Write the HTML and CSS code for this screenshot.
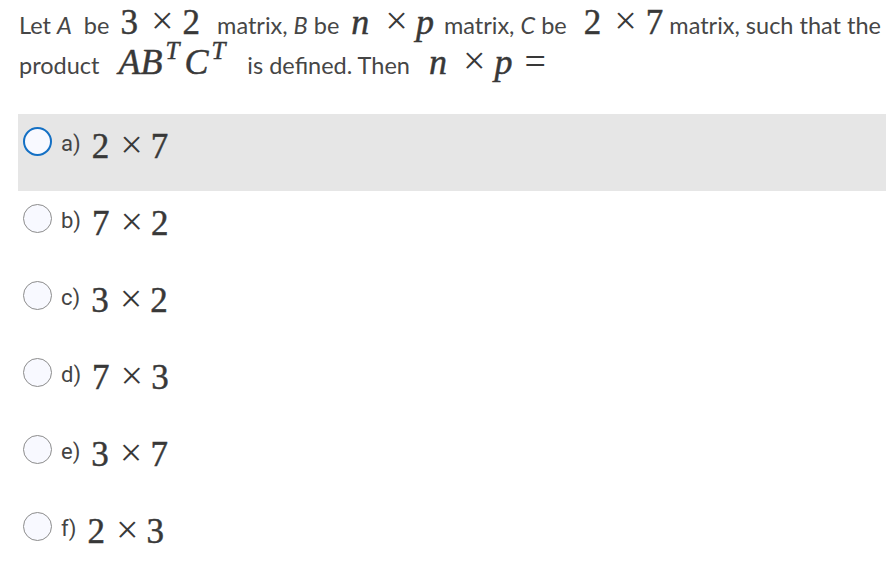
FILE: index.html
```html
<!DOCTYPE html>
<html lang="en">
<head>
<meta charset="utf-8">
<title>Question</title>
<link rel="stylesheet" href="styles.css">
</head>
<body>
<div class="question">
  <p class="stem">Let <i class="var">A</i>&nbsp; be <span class="m m1">3<span class="op">×</span>2</span>&nbsp; matrix, <i class="var">B</i> be <span class="m m2"><i class="n">n</i><span class="op">×</span><i>p</i></span> matrix, <i class="var">C</i> be&nbsp; <span class="m m3">2<span class="op">×</span>7</span> matrix, such that the<br>product <span class="m prod"><i>A</i><i class="b">B</i><sup>T</sup><i class="c">C</i><sup>T</sup></span> is defined. Then&nbsp; <span class="m m4"><i class="n">n</i><span class="op">×</span><i>p</i><span class="rel">=</span></span></p>
  <div class="options">
    <label class="opt selected"><span class="radio"></span><span class="lbl">a)</span><span class="m">2<span class="op">×</span>7</span></label>
    <label class="opt"><span class="radio"></span><span class="lbl">b)</span><span class="m">7<span class="op">×</span>2</span></label>
    <label class="opt"><span class="radio"></span><span class="lbl">c)</span><span class="m">3<span class="op">×</span>2</span></label>
    <label class="opt"><span class="radio"></span><span class="lbl">d)</span><span class="m">7<span class="op">×</span>3</span></label>
    <label class="opt"><span class="radio"></span><span class="lbl">e)</span><span class="m">3<span class="op">×</span>7</span></label>
    <label class="opt"><span class="radio"></span><span class="lbl">f)</span><span class="m">2<span class="op">×</span>3</span></label>
  </div>
</div>
</body>
</html>
```

FILE: styles.css
```css
html, body {
  margin: 0;
  padding: 0;
  background: #ffffff;
}

body {
  font-family: Lato, "Open Sans", sans-serif;
  color: #464646;
  width: 886px;
  overflow: hidden;
}

.stem {
  margin: 0;
  padding: 5px 0 0 19px;
  font-size: 23.5px;
  line-height: 40px;
  white-space: nowrap;
}

.var {
  font-style: italic;
}

.m {
  font-family: "Liberation Serif", serif;
  font-size: 35px;
  line-height: 34px;
  color: #383838;
  white-space: nowrap;
  -webkit-text-stroke: 0.45px #383838;
}

.m i {
  font-family: "Liberation Serif", serif;
  font-style: italic;
  font-size: 36px;
}

.m .n {
  margin-right: 2px;
}

.m sup {
  font-family: "Liberation Serif", serif;
  font-size: 25px;
  line-height: 0;
  vertical-align: 15px;
  font-style: italic;
  margin: 0 5px 0 2px;
}

.m .b,
.m .c {
  margin-right: 1px;
}

.op {
  font-size: 40px;
  line-height: 30px;
  margin: 0 9px 0 13px;
  -webkit-text-stroke: 0;
  font-style: normal;
}

.m1 {
  margin: 0 5px 0 5px;
}

.m2 {
  margin: 0 4px 0 6px;
}

.m2 .op {
  margin: 0 8px 0 14px;
}

.m3 {
  margin-left: 5px;
}

.prod {
  margin: 0 11px 0 13px;
}

.m4 {
  margin-left: 7px;
}

.m4 .op {
  margin: 0 9px 0 14px;
}

.rel {
  font-size: 38px;
  line-height: 30px;
  margin-left: 12px;
  -webkit-text-stroke: 0;
}

.options {
  margin-top: 29px;
  display: flex;
  flex-direction: column;
}

.opt {
  display: flex;
  align-items: flex-start;
  height: 77px;
  box-sizing: border-box;
  margin-left: 18px;
  padding: 13px 0 0 5px;
}

.opt.selected {
  background: #e6e6e6;
}

.radio {
  flex: none;
  width: 29px;
  height: 29px;
  box-sizing: border-box;
  border-radius: 50%;
  border: 1px solid #8c8c8c;
  background: #f8f9ff;
}

.selected .radio {
  border: 2.5px solid #1470c4;
}

.lbl {
  font-family: Roboto, "Liberation Sans", sans-serif;
  font-size: 22px;
  line-height: 29px;
  margin: 1.5px 0 0 9px;
  color: #444;
}

.opt .m {
  margin: 3px 0 0 11px;
  line-height: 29px;
}

.opt .op {
  margin: 0 8px 0 11px;
}
```
